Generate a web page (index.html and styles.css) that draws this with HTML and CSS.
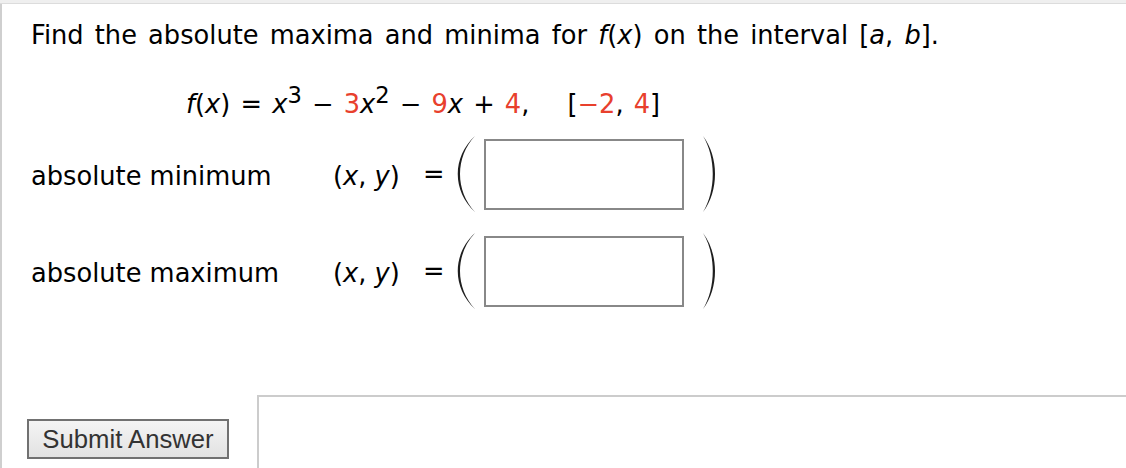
FILE: index.html
```html
<!DOCTYPE html>
<html>
<head>
    <title>Absolute maxima and minima</title>
    <link rel="stylesheet" href="styles.css">
</head>
<body>
    <div class="topbar"></div>
    <div class="question">
        <p class="prompt">Find the absolute maxima and minima for <i>f</i>(<i>x</i>) on the interval [<i>a</i>, <i>b</i>].</p>

        <p class="formula">
            <i>f</i>(<i>x</i>) = <i>x</i><sup>3</sup> &minus; <span class="red">3</span><i>x</i><sup>2</sup> &minus; <span class="red">9</span><i>x</i> + <span class="red">4</span>,
            <span class="interval">[<span class="red">&minus;2</span>, <span class="red">4</span>]</span>
        </p>

        <div class="answer-row">
            <span class="label">absolute minimum</span>
            <span class="xy">(<i>x</i>, <i>y</i>)</span>
            <span class="eq">=</span>
            <svg class="paren" width="22" height="78" viewBox="0 0 22 78"><path d="M20 1 C-3 22 -3 56 20 77 C0 56 0 22 20 1 Z" fill="#1e1e1e"/></svg>
            <input class="answer-box" type="text">
            <svg class="paren right" width="16" height="78" viewBox="0 0 16 78"><path d="M2 1 C18 22 18 56 2 77 C15 56 15 22 2 1 Z" fill="#1e1e1e"/></svg>
        </div>

        <div class="answer-row">
            <span class="label">absolute maximum</span>
            <span class="xy">(<i>x</i>, <i>y</i>)</span>
            <span class="eq">=</span>
            <svg class="paren" width="22" height="78" viewBox="0 0 22 78"><path d="M20 1 C-3 22 -3 56 20 77 C0 56 0 22 20 1 Z" fill="#1e1e1e"/></svg>
            <input class="answer-box" type="text">
            <svg class="paren right" width="16" height="78" viewBox="0 0 16 78"><path d="M2 1 C18 22 18 56 2 77 C15 56 15 22 2 1 Z" fill="#1e1e1e"/></svg>
        </div>

        <div class="footer">
            <button class="submit">Submit Answer</button>
            <div class="result-box"></div>
        </div>
    </div>
</body>
</html>
```

FILE: styles.css
```css
body {
    margin: 0;
    background-color: #fff;
    font-family: "DejaVu Sans", Verdana, sans-serif;
    font-size: 25.7px;
    color: #000;
    height: 468px;
    overflow: hidden;
}

.topbar {
    height: 3px;
    background-color: #efefef;
    border-bottom: 1px solid #dcdcdc;
}

.question {
    box-sizing: border-box;
    height: 464px;
    border-left: 2px solid #cfcfcf;
    padding: 16px 0 0 29px;
}

p {
    margin: 0;
    line-height: 30px;
}

.prompt {
    word-spacing: 3px;
}

.formula {
    margin-top: 39px;
    margin-left: 155px;
    word-spacing: 2px;
}

.formula sup {
    font-size: 0.88em;
    line-height: 0;
    vertical-align: 0.45em;
}

.red {
    color: #e8402d;
}

.interval {
    margin-left: 28px;
}

.answer-row {
    display: flex;
    align-items: center;
    height: 78px;
    margin-top: 16px;
}

.answer-row + .answer-row {
    margin-top: 19px;
}

.label,
.xy {
    padding-top: 3px;
}

.label {
    width: 302px;
}

.xy {
    width: 90px;
}

.eq {
    width: 32px;
}

.paren {
    display: block;
    margin-right: 7px;
}

.paren.right {
    margin-left: 17px;
    margin-right: 0;
}

.answer-box {
    box-sizing: border-box;
    width: 200px;
    height: 71px;
    border: 2px solid #888;
    margin: 0;
    padding: 0;
    font-size: 20px;
}

.footer {
    display: flex;
    align-items: flex-start;
    margin-top: 85px;
    margin-left: -4px;
}

.submit {
    box-sizing: border-box;
    width: 202px;
    height: 40px;
    margin-top: 24px;
    padding: 0;
    font-family: "Liberation Sans", Arial, sans-serif;
    font-size: 25.7px;
    color: #333;
    background: linear-gradient(#f4f4f4, #e2e2e2);
    border: 2px solid #717171;
    border-radius: 0;
}

.result-box {
    flex: 1;
    height: 72px;
    margin-left: 28px;
    border-top: 2px solid #cccccc;
    border-left: 2px solid #cccccc;
}
```
